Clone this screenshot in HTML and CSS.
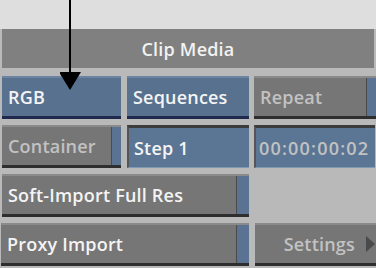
FILE: index.html
```html
<!DOCTYPE html>
<html>
<head>
<meta charset="utf-8">
<link rel="stylesheet" href="styles.css">
</head>
<body>
<div class="top"></div>
<div class="panel">
  <div class="title">Clip Media</div>
  <div class="grid">
    <div class="btn blue"><span class="label">RGB</span></div>
    <div class="btn blue"><span class="label">Sequences</span></div>
    <div class="btn gray dim ind ind-r"><span class="label">Repeat</span><span class="strip"></span></div>

    <div class="btn gray dim ind"><span class="label">Container</span><span class="strip small"></span></div>
    <div class="field"><span class="label">Step 1</span></div>
    <div class="field dim tc"><span class="label">00:00:00:02</span></div>

    <div class="btn gray ind span2"><span class="label">Soft-Import Full Res</span><span class="strip"></span></div>
    <div class="empty"></div>

    <div class="btn gray ind span2"><span class="label">Proxy Import</span><span class="strip"></span></div>
    <div class="btn gray dim settings"><span class="label right">Settings</span><span class="tri"></span></div>
  </div>
</div>
<svg class="arrow" width="30" height="92" viewBox="0 0 30 92">
  <rect x="9" y="0" width="2" height="76" fill="#000"/>
  <polygon points="-1,72 21,72 10,90" fill="#000"/>
</svg>
</body>
</html>
```
FILE: styles.css
```css
html, body {
  margin: 0;
  padding: 0;
  width: 376px;
  height: 268px;
  overflow: hidden;
  background: #b9b9b9;
  font-family: "Open Sans", "Liberation Sans", sans-serif;
  position: relative;
}
.top {
  height: 29px;
  background: #dedede;
}
.panel {
  background: #b9b9b9;
  padding: 0 0 0 2px;
  width: 380px;
}
.title {
  height: 39px;
  width: 372px;
  background: #808080;
  color: #f2f2f2;
  font-size: 18px;
  font-weight: 600;
  letter-spacing: 0.2px;
  display: flex;
  align-items: center;
  justify-content: center;
  box-sizing: border-box;
  padding-top: 1px;
}
.grid {
  margin-top: 8px;
  display: grid;
  grid-template-columns: 119px 122px 126px;
  grid-auto-rows: 43px;
  column-gap: 6px;
  row-gap: 6px;
}
.grid > :nth-child(3n+3) { margin-left: -1px; }
.btn, .field {
  display: flex;
  align-items: stretch;
  box-sizing: border-box;
  font-size: 18px;
  font-weight: 600;
  color: #f4f4f4;
  overflow: hidden;
}
.label {
  flex: 1;
  display: flex;
  align-items: center;
  padding-left: 6px;
  white-space: nowrap;
  letter-spacing: 0.2px;
}
.blue {
  background: #57718f;
  border-top: 2px solid #6c84a1;
  border-bottom: 3px solid #1f2a4e;
}
.gray {
  background: #767676;
  border-top: 2px solid #8a8a8a;
  border-bottom: 3px solid #2e2e2e;
}
.dim { color: #c2c2c2; }
.strip {
  width: 12px;
  background: #5a7393;
  margin-top: -2px;
  margin-bottom: -3px;
  border-top: 2px solid #7088a5;
  border-bottom: 3px solid #1f2a4e;
  border-left: 1px solid #4b4b4b;
}
.strip.small { width: 9px; }
.ind-r .strip { width: 14px; }
.span2 { grid-column: span 2; }
.field {
  background: #5b7694;
  border-top: 3px solid #3c3c3c;
  border-left: 2px solid #555;
  border-bottom: 1px solid #8299b2;
}
.field .label { padding-left: 5px; }
.tc { margin-right: 6px; }
.tc .label { padding-left: 3px; letter-spacing: 1.2px; }
.settings .label.right {
  justify-content: flex-end;
  padding-right: 11px;
}
.tri {
  width: 0;
  height: 0;
  align-self: center;
  border-top: 8px solid transparent;
  border-bottom: 8px solid transparent;
  border-left: 9px solid #4a4a4a;
  margin-right: 6px;
}
.arrow {
  position: absolute;
  left: 60px;
  top: 0;
}
```
